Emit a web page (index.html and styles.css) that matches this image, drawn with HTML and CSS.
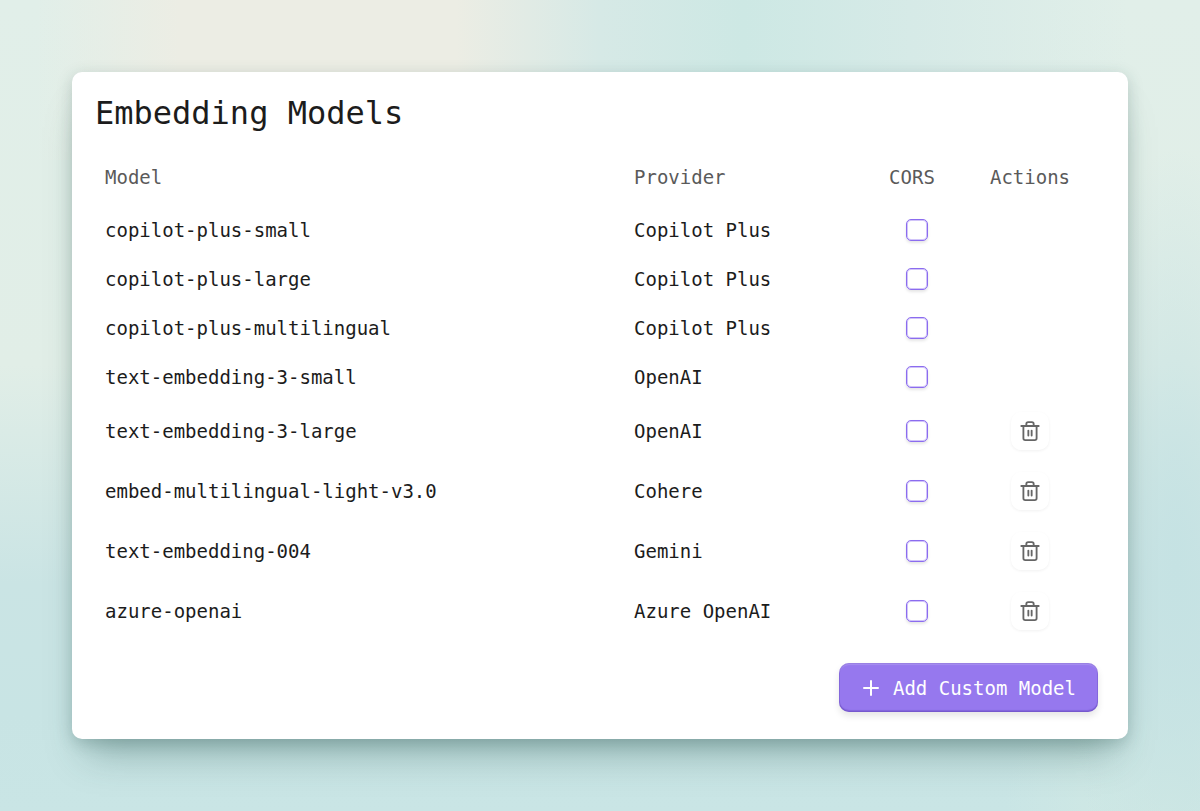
FILE: index.html
```
<!DOCTYPE html>
<html lang="en">
<head>
    <meta charset="UTF-8">
    <meta name="viewport" content="width=device-width, initial-scale=1.0">
    <title>Embedding Models</title>
    <link rel="stylesheet" href="styles.css">
</head>
<body>
    <!-- Shared trash icon -->
    <svg class="sprite" aria-hidden="true">
        <symbol id="trash" viewBox="0 0 24 24">
            <path d="M2.500 6.500h19M4.800 6.500v13.500c0 1.200.9 2 2 2h10.400c1.100 0 2-.8 2-2v-13.500M8 6.500V4.300c0-1.100.9-2 2-2h4c1.100 0 2 .9 2 2v2.200M10.200 11.500v5.500M13.800 11.500v5.500"/>
        </symbol>
    </svg>

    <main class="card">
        <h1>Embedding Models</h1>

        <table class="models">
            <thead>
                <tr>
                    <th class="col-model">Model</th>
                    <th class="col-provider">Provider</th>
                    <th class="col-cors">CORS</th>
                    <th class="col-actions">Actions</th>
                </tr>
            </thead>
            <tbody>
                <tr>
                    <td>copilot-plus-small</td>
                    <td>Copilot Plus</td>
                    <td class="cors"><input type="checkbox" aria-label="CORS for copilot-plus-small"></td>
                    <td></td>
                </tr>
                <tr>
                    <td>copilot-plus-large</td>
                    <td>Copilot Plus</td>
                    <td class="cors"><input type="checkbox" aria-label="CORS for copilot-plus-large"></td>
                    <td></td>
                </tr>
                <tr>
                    <td>copilot-plus-multilingual</td>
                    <td>Copilot Plus</td>
                    <td class="cors"><input type="checkbox" aria-label="CORS for copilot-plus-multilingual"></td>
                    <td></td>
                </tr>
                <tr>
                    <td>text-embedding-3-small</td>
                    <td>OpenAI</td>
                    <td class="cors"><input type="checkbox" aria-label="CORS for text-embedding-3-small"></td>
                    <td></td>
                </tr>
                <tr>
                    <td>text-embedding-3-large</td>
                    <td>OpenAI</td>
                    <td class="cors"><input type="checkbox" aria-label="CORS for text-embedding-3-large"></td>
                    <td class="actions"><button type="button" class="delete-btn" aria-label="Delete text-embedding-3-large"><svg><use href="#trash"/></svg></button></td>
                </tr>
                <tr>
                    <td>embed-multilingual-light-v3.0</td>
                    <td>Cohere</td>
                    <td class="cors"><input type="checkbox" aria-label="CORS for embed-multilingual-light-v3.0"></td>
                    <td class="actions"><button type="button" class="delete-btn" aria-label="Delete embed-multilingual-light-v3.0"><svg><use href="#trash"/></svg></button></td>
                </tr>
                <tr>
                    <td>text-embedding-004</td>
                    <td>Gemini</td>
                    <td class="cors"><input type="checkbox" aria-label="CORS for text-embedding-004"></td>
                    <td class="actions"><button type="button" class="delete-btn" aria-label="Delete text-embedding-004"><svg><use href="#trash"/></svg></button></td>
                </tr>
                <tr>
                    <td>azure-openai</td>
                    <td>Azure OpenAI</td>
                    <td class="cors"><input type="checkbox" aria-label="CORS for azure-openai"></td>
                    <td class="actions"><button type="button" class="delete-btn" aria-label="Delete azure-openai"><svg><use href="#trash"/></svg></button></td>
                </tr>
            </tbody>
        </table>

        <div class="footer">
            <button type="button" class="add-btn">
                <svg viewBox="0 0 16 16" aria-hidden="true"><path d="M8 1v14M1 8h14"/></svg>
                Add Custom Model
            </button>
        </div>
    </main>
</body>
</html>
```
FILE: styles.css
```
* {
    margin: 0;
    padding: 0;
    box-sizing: border-box;
}

body {
    min-height: 100vh;
    padding: 72px;
    font-family: 'DejaVu Sans Mono', monospace;
    font-size: 19px;
    line-height: 24px;
    color: #1c1c1c;
    background:
        linear-gradient(90deg, rgba(236, 237, 228, 0) 3%, #ecede4 15%, #ecede4 38%, #d6e9e6 50%, #cde8e4 62%, #d6eae7 76%, rgba(214, 234, 231, 0) 94%) top / 100% 160px no-repeat,
        radial-gradient(ellipse 110px 420px at 98% 70%, #c5e2e3 0%, rgba(197, 226, 227, 0) 100%),
        radial-gradient(ellipse 160px 160px at 97% 100%, #d1e9e4 0%, rgba(209, 233, 228, 0) 100%),
        linear-gradient(180deg, #e1efe9 0%, #e1eee7 45%, #cae4e4 72%, #c8e4e4 88%, #c9e5e5 100%);
}

.sprite {
    display: none;
}

.card {
    padding: 23px 30px 27px 23px;
    background: #fff;
    border-radius: 10px;
    box-shadow: 0 28px 36px -14px rgba(30, 75, 70, 0.34), 0 4px 16px rgba(30, 75, 70, 0.22);
}

h1 {
    margin-bottom: 18px;
    font-size: 32px;
    font-weight: 400;
    line-height: 36px;
}

.models {
    width: 100%;
    table-layout: fixed;
    border-collapse: collapse;
}

th {
    height: 56px;
    padding: 0 10px;
    color: #5a5a5a;
    font-weight: 400;
    text-align: left;
}

td {
    height: 49px;
    padding: 0 10px;
}

.col-provider {
    width: 238px;
}

.col-cors {
    width: 100px;
    text-align: center;
}

.col-actions {
    width: 136px;
    text-align: center;
}

.cors {
    padding-right: 0;
    text-align: center;
}

.cors input {
    appearance: none;
    display: block;
    width: 22px;
    height: 22px;
    margin: 0 auto;
    border: 1px solid #8b6cef;
    border-radius: 5px;
    box-shadow: 0 2px 3px rgba(0, 0, 0, 0.1), inset 0 0 0 1px rgba(139, 108, 239, 0.4);
    cursor: pointer;
}

.cors input:checked {
    background: #9678ee;
}

.actions {
    height: 60px;
    text-align: center;
}

.delete-btn {
    display: flex;
    align-items: center;
    justify-content: center;
    width: 38px;
    height: 38px;
    margin: 0 auto;
    background: #fff;
    border: none;
    border-radius: 10px;
    box-shadow: 0 1px 3px rgba(0, 0, 0, 0.06);
    color: #666;
    cursor: pointer;
}

.delete-btn svg {
    width: 22px;
    height: 22px;
    fill: none;
    stroke: currentColor;
    stroke-width: 2;
    stroke-linecap: round;
    stroke-linejoin: round;
}

.footer {
    display: flex;
    justify-content: flex-end;
    margin-top: 22px;
}

.add-btn {
    display: flex;
    align-items: center;
    gap: 14px;
    height: 49px;
    padding: 0 22px 0 24px;
    background: #9678ee;
    border: none;
    border-radius: 10px;
    box-shadow: inset 0 2px 1px rgba(255, 255, 255, 0.16), inset 0 -2px 1px rgba(70, 40, 160, 0.25), inset 0 0 0 1px rgba(70, 40, 160, 0.2), 0 4px 7px rgba(0, 0, 0, 0.1);
    color: #fff;
    font: inherit;
    cursor: pointer;
}

.add-btn svg {
    width: 16px;
    height: 16px;
    fill: none;
    stroke: currentColor;
    stroke-width: 2;
    stroke-linecap: round;
}
```
